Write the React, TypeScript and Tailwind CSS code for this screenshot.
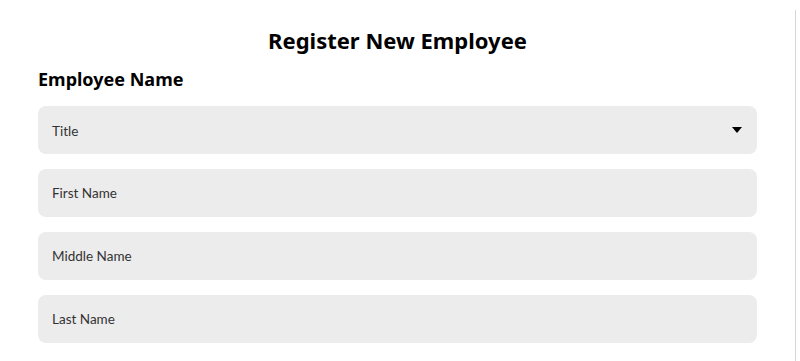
import { useState } from 'react'

const fields = ['First Name', 'Middle Name', 'Last Name']

export default function App() {
  const [title] = useState('')

  return (
    <div className="flex h-[361px] w-[800px] overflow-hidden bg-white">
      <div className="w-[795px] px-[38px] pt-[24px]">
        <h1
          className="text-center text-[22px] font-bold leading-[32px] text-black"
          style={{ fontFamily: '"Noto Sans", sans-serif' }}
        >
          Register New Employee
        </h1>
        <h2
          className="mt-[10px] text-[18px] font-bold leading-[26px] text-black"
          style={{ fontFamily: '"Noto Sans", sans-serif' }}
        >
          Employee Name
        </h2>

        <div className="mt-[14px] flex flex-col gap-[15px]" style={{ fontFamily: 'Lato, sans-serif' }}>
          <div className="flex h-[48px] items-center justify-between rounded-lg bg-[#ececec] pl-[14px] pr-[15px]">
            <span className="pt-[2px] text-[13.5px] text-[#333]">{title || 'Title'}</span>
            <svg width="10" height="6" viewBox="0 0 10 6">
              <path d="M0 0h10L5 6z" fill="#000" />
            </svg>
          </div>
          {fields.map((f) => (
            <div key={f} className="flex h-[48px] items-center rounded-lg bg-[#ececec] pl-[14px]">
              <span className="text-[13.5px] text-[#333]">{f}</span>
            </div>
          ))}
        </div>
      </div>
      <div className="mt-[10px] w-[5px] border-l border-[#d6d6d6]" />
    </div>
  )
}
